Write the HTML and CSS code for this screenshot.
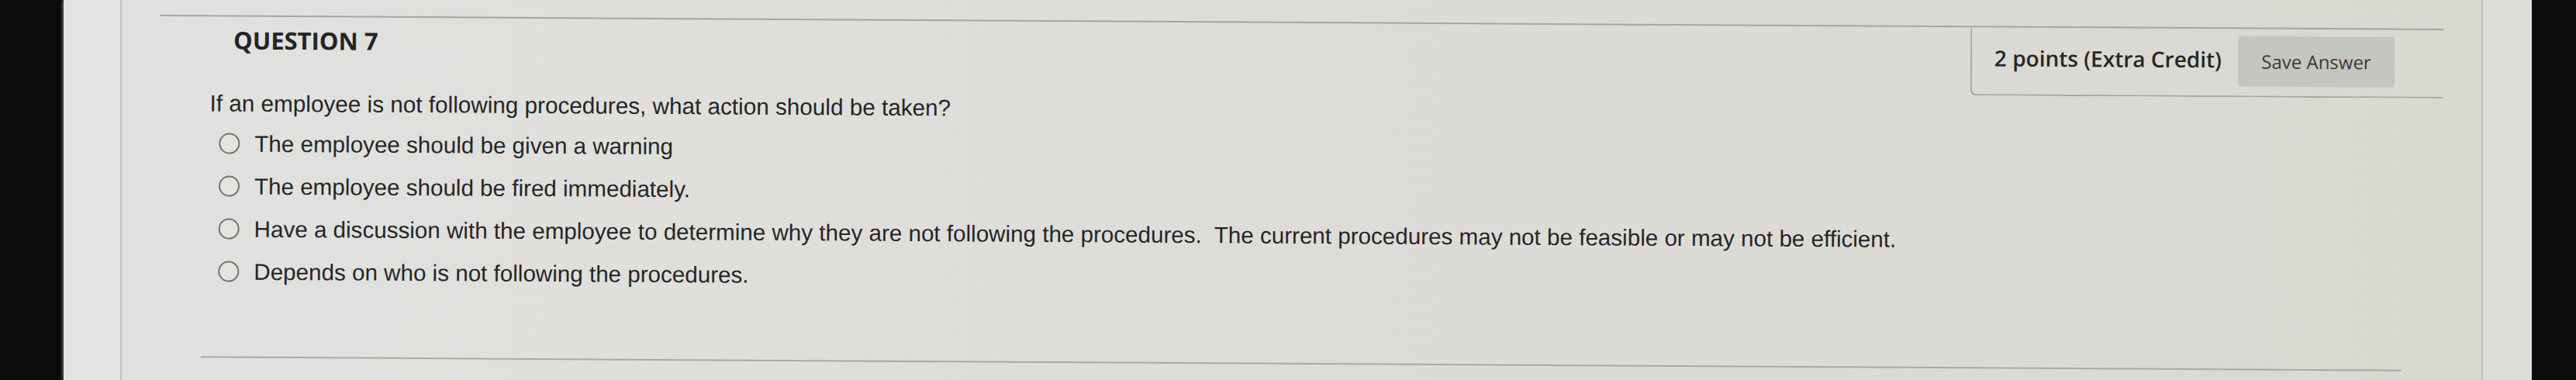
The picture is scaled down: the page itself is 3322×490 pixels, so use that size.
FILE: index.html
```html
<!DOCTYPE html>
<html lang="en">
<head>
<meta charset="utf-8">
<title>Question 7</title>
<link rel="stylesheet" href="styles.css">
</head>
<body>
<div class="screen">
  <div class="gutter gutter-left"></div>
  <main class="page">
    <div class="content">
      <header class="q-header">
        <h2 class="q-title">QUESTION 7</h2>
        <div class="q-points">
          <span class="points">2 points (Extra Credit)</span>
          <button class="save" type="button">Save Answer</button>
        </div>
      </header>
      <p class="q-text">If an employee is not following procedures, what action should be taken?</p>
      <ul class="options">
        <li class="option"><span class="radio"></span><span class="label">The employee should be given a warning</span></li>
        <li class="option"><span class="radio"></span><span class="label">The employee should be fired immediately.</span></li>
        <li class="option"><span class="radio"></span><span class="label">Have a discussion with the employee to determine why they are not following the procedures.&nbsp; The current procedures may not be feasible or may not be efficient.</span></li>
        <li class="option"><span class="radio"></span><span class="label">Depends on who is not following the procedures.</span></li>
      </ul>
      <hr class="q-sep">
    </div>
  </main>
  <div class="gutter gutter-right"></div>
</div>
</body>
</html>
```

FILE: styles.css
```css
html, body {
  margin: 0;
  height: 490px;
  overflow: hidden;
  background: #0b0b0c;
}

.screen {
  display: flex;
  margin-left: 82px;
  width: 3183px;
  height: 490px;
  background: #e1e2df;
  box-shadow: -2px 0 3px rgba(120, 125, 125, 0.6);
}

.gutter-left {
  width: 73px;
  flex: none;
  border-right: 2px solid #c3c4c0;
  background: #e3e4e2;
}

.page {
  flex: 1;
  border-right: 2px solid #bdbeb7;
  background: linear-gradient(90deg, #e1e1df 0%, #dddcd8 50%, #d9d9d2 100%);
}

.gutter-right {
  width: 63px;
  flex: none;
  background: #dcddd6;
}

.content {
  height: 100%;
  box-sizing: border-box;
  padding-top: 28px;
  transform: rotate(0.35deg);
}

.q-header {
  display: flex;
  justify-content: space-between;
  align-items: flex-start;
  margin-left: 48px;
  width: 2945px;
  border-top: 2px solid #a5a5a1;
}

.q-title {
  margin: 14px 0 0 95px;
  font: 700 31px/32px "Open Sans", "Liberation Sans", sans-serif;
  color: #242424;
}

.q-points {
  display: flex;
  justify-content: flex-end;
  align-items: flex-start;
  gap: 21px;
  box-sizing: border-box;
  width: 610px;
  height: 88px;
  padding: 9px 63px 0 25px;
  border-left: 2px solid #a8a8a3;
  border-bottom: 2px solid #a8a8a3;
  border-bottom-left-radius: 8px;
}

.points {
  margin-top: -2px;
  font: 600 28px/65px "Open Sans", "Liberation Sans", sans-serif;
  color: #262626;
  white-space: nowrap;
}

.save {
  flex: none;
  width: 202px;
  height: 65px;
  padding: 0;
  border: 0;
  border-radius: 2px;
  background: #c5c5c1;
  font: 400 24px "Open Sans", "Liberation Sans", sans-serif;
  color: #3a3a3a;
}

.q-text {
  margin: 8.6px 0 0 113px;
  font: 400 29.7px/30px "Liberation Sans", Arial, sans-serif;
  color: #262626;
}

.options {
  list-style: none;
  margin: 9.5px 0 0 125px;
  padding: 0;
}

.option {
  display: flex;
  align-items: center;
  height: 55px;
  font: 400 29.6px/55px "Liberation Sans", Arial, sans-serif;
  color: #262626;
  white-space: nowrap;
}

.radio {
  flex: none;
  width: 27px;
  height: 27px;
  box-sizing: border-box;
  margin-right: 19px;
  border: 2px solid #747474;
  border-radius: 50%;
  background: #e3e3e0;
}

.q-sep {
  margin: 82px 0 0 103px;
  width: 2838px;
  height: 0;
  border: 0;
  border-top: 2px solid #a9a9a5;
}
```
